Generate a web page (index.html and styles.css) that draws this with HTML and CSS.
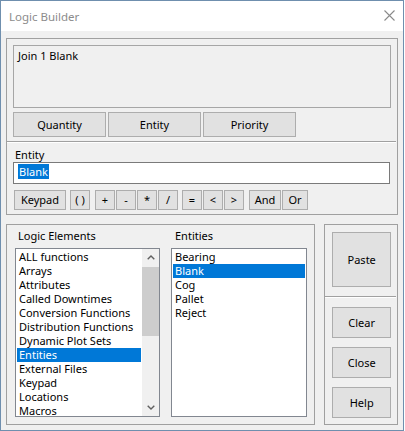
FILE: index.html
```
<!DOCTYPE html>
<html>
<head>
<meta charset="utf-8">
<title>Logic Builder</title>
<link rel="stylesheet" href="styles.css">
</head>
<body>
<div class="window">
  <div class="titlebar">
    <span class="title">Logic Builder</span>
    <svg class="close" width="11" height="11" viewBox="0 0 11 11"><path d="M0.5 0.5 L10.5 10.5 M10.5 0.5 L0.5 10.5" stroke="#8a8a8a" stroke-width="1.1" fill="none"/></svg>
  </div>
  <div class="client">
    <div class="group top-group">
      <div class="expr">Join 1 Blank</div>
      <div class="tabs">
        <button class="btn tab">Quantity</button>
        <button class="btn tab">Entity</button>
        <button class="btn tab">Priority</button>
      </div>
      <div class="sep sep-top"></div>
      <div class="label entity-label">Entity</div>
      <div class="input"><span class="sel">Blank</span></div>
      <div class="keys">
        <div class="keygroup"><button class="btn key keypad">Keypad</button></div>
        <div class="keygroup"><button class="btn key">( )</button></div>
        <div class="keygroup wide"><button class="btn key">+</button><button class="btn key">-</button><button class="btn key">*</button><button class="btn key">/</button></div>
        <div class="keygroup"><button class="btn key">=</button><button class="btn key">&lt;</button><button class="btn key">&gt;</button></div>
        <div class="keygroup wide"><button class="btn key and">And</button><button class="btn key or">Or</button></div>
      </div>
    </div>
    <div class="bottom">
      <div class="group lists">
        <div class="col col-left">
          <div class="label list-label">Logic Elements</div>
          <div class="listbox listbox-left">
            <div class="items">
              <div class="item">ALL functions</div>
              <div class="item">Arrays</div>
              <div class="item">Attributes</div>
              <div class="item">Called Downtimes</div>
              <div class="item">Conversion Functions</div>
              <div class="item">Distribution Functions</div>
              <div class="item">Dynamic Plot Sets</div>
              <div class="item selected">Entities</div>
              <div class="item">External Files</div>
              <div class="item">Keypad</div>
              <div class="item">Locations</div>
              <div class="item">Macros</div>
            </div>
            <div class="scrollbar">
              <div class="arrow"><svg width="8" height="5" viewBox="0 0 8 5"><polyline points="0.7,4.3 4,1 7.3,4.3" fill="none" stroke="#606060" stroke-width="1.4"/></svg></div>
              <div class="thumb"></div>
              <div class="track"></div>
              <div class="arrow"><svg width="8" height="5" viewBox="0 0 8 5"><polyline points="0.7,0.7 4,4 7.3,0.7" fill="none" stroke="#606060" stroke-width="1.4"/></svg></div>
            </div>
          </div>
        </div>
        <div class="col col-right">
          <div class="label list-label list-label-right">Entities</div>
          <div class="listbox listbox-right">
            <div class="items">
              <div class="item">Bearing</div>
              <div class="item selected">Blank</div>
              <div class="item">Cog</div>
              <div class="item">Pallet</div>
              <div class="item">Reject</div>
            </div>
          </div>
        </div>
      </div>
      <div class="group actions">
        <button class="btn paste">Paste</button>
        <div class="sep sep-actions"></div>
        <button class="btn action">Clear</button>
        <button class="btn action">Close</button>
        <button class="btn action">Help</button>
      </div>
    </div>
  </div>
</div>
</body>
</html>
```
FILE: styles.css
```
* { box-sizing: border-box; }

body {
  margin: 0;
  background: #ffffff;
  font-family: "Noto Sans", "DejaVu Sans", sans-serif;
  font-size: 11px;
  color: #000;
}

.window {
  width: 404px;
  height: 431px;
  border: 1px solid #6f8fae;
  display: flex;
  flex-direction: column;
  background: #f0f0f0;
}

.titlebar {
  height: 30px;
  flex: 0 0 30px;
  background: #ffffff;
  display: flex;
  align-items: center;
  padding-left: 8px;
}

.title {
  color: #8c8c8c;
  font-size: 11.5px;
  line-height: 14px;
  margin-top: 1px;
}

.close {
  margin-left: auto;
  margin-right: 8px;
  align-self: flex-start;
  margin-top: 9px;
}

.client {
  flex: 1;
  padding: 7px 5px 0 5px;
  background: #f0f0f0;
}

.group {
  border: 1px solid #a0a0a0;
}

.top-group {
  width: 392px;
  height: 177px;
  padding: 6px 6px 0 6px;
}

.expr {
  width: 378px;
  height: 63px;
  border: 1px solid #a6a6a6;
  background: #f0f0f0;
  padding: 3px 4px;
  line-height: 14px;
}

.btn {
  font-family: inherit;
  font-size: 11px;
  color: #000;
  background: #e1e1e1;
  border: 1px solid #adadad;
  margin: 0;
  padding: 0;
  line-height: 14px;
  display: flex;
  align-items: center;
  justify-content: center;
}

.tabs {
  display: flex;
  gap: 2px;
  margin-top: 4px;
  height: 25px;
}

.tab {
  width: 93px;
  height: 25px;
}

.sep {
  height: 2px;
  border-top: 1px solid #a0a0a0;
  border-bottom: 1px solid #ffffff;
}

.sep-top {
  margin: 4px -5px 0 -6px;
}

.label {
  height: 14px;
  line-height: 14px;
}

.entity-label {
  margin-top: 5px;
  padding-left: 2px;
}

.input {
  width: 377px;
  height: 22px;
  border: 1px solid #7a7a7a;
  background: #ffffff;
  padding: 1px 0 0 4px;
  display: flex;
  align-items: flex-start;
}

.sel {
  background: #0078d7;
  color: #ffffff;
  line-height: 15px;
  height: 15px;
  padding: 0 1px;
}

.keys {
  display: flex;
  gap: 4px;
  margin-top: 6px;
  padding-left: 1px;
  height: 20px;
}

.keygroup {
  display: flex;
  gap: 1px;
}

.keygroup.wide {
  margin-left: 1px;
}

.key {
  width: 20px;
  height: 20px;
}

.keypad { width: 52px; }
.and { width: 32px; }
.or { width: 26px; }

.bottom {
  display: flex;
  gap: 9px;
  margin-top: 9px;
}

.lists {
  width: 310px;
  height: 201px;
  display: flex;
  gap: 11px;
  padding: 4px 0 0 8px;
}

.col {
  display: flex;
  flex-direction: column;
}

.list-label {
  margin-bottom: 5px;
  padding-left: 3px;
}

.list-label-right {
  padding-left: 4px;
}

.listbox {
  height: 169px;
  border: 1px solid #828790;
  background: #ffffff;
  display: flex;
  overflow: hidden;
}

.listbox-left { width: 145px; }
.listbox-right { width: 136px; }

.items {
  flex: 1;
  padding-top: 1px;
  overflow: hidden;
}

.item {
  height: 14px;
  line-height: 14px;
  margin: 0 1px;
  padding-left: 2px;
  white-space: nowrap;
}

.item.selected {
  background: #0078d7;
  color: #ffffff;
}

.scrollbar {
  width: 17px;
  background: #f0f0f0;
  display: flex;
  flex-direction: column;
}

.arrow {
  height: 17px;
  display: flex;
  align-items: center;
  justify-content: center;
}

.arrow svg { display: block; }

.thumb {
  height: 69px;
  margin-top: 1px;
  background: #cdcdcd;
}

.track { flex: 1; }

.actions {
  width: 74px;
  height: 201px;
  padding: 7px 0 0 7px;
}

.paste {
  width: 59px;
  height: 55px;
}

.sep-actions {
  margin: 9px 1px 0 -7px;
}

.action {
  width: 59px;
  height: 31px;
  margin-top: 9px;
}
```
